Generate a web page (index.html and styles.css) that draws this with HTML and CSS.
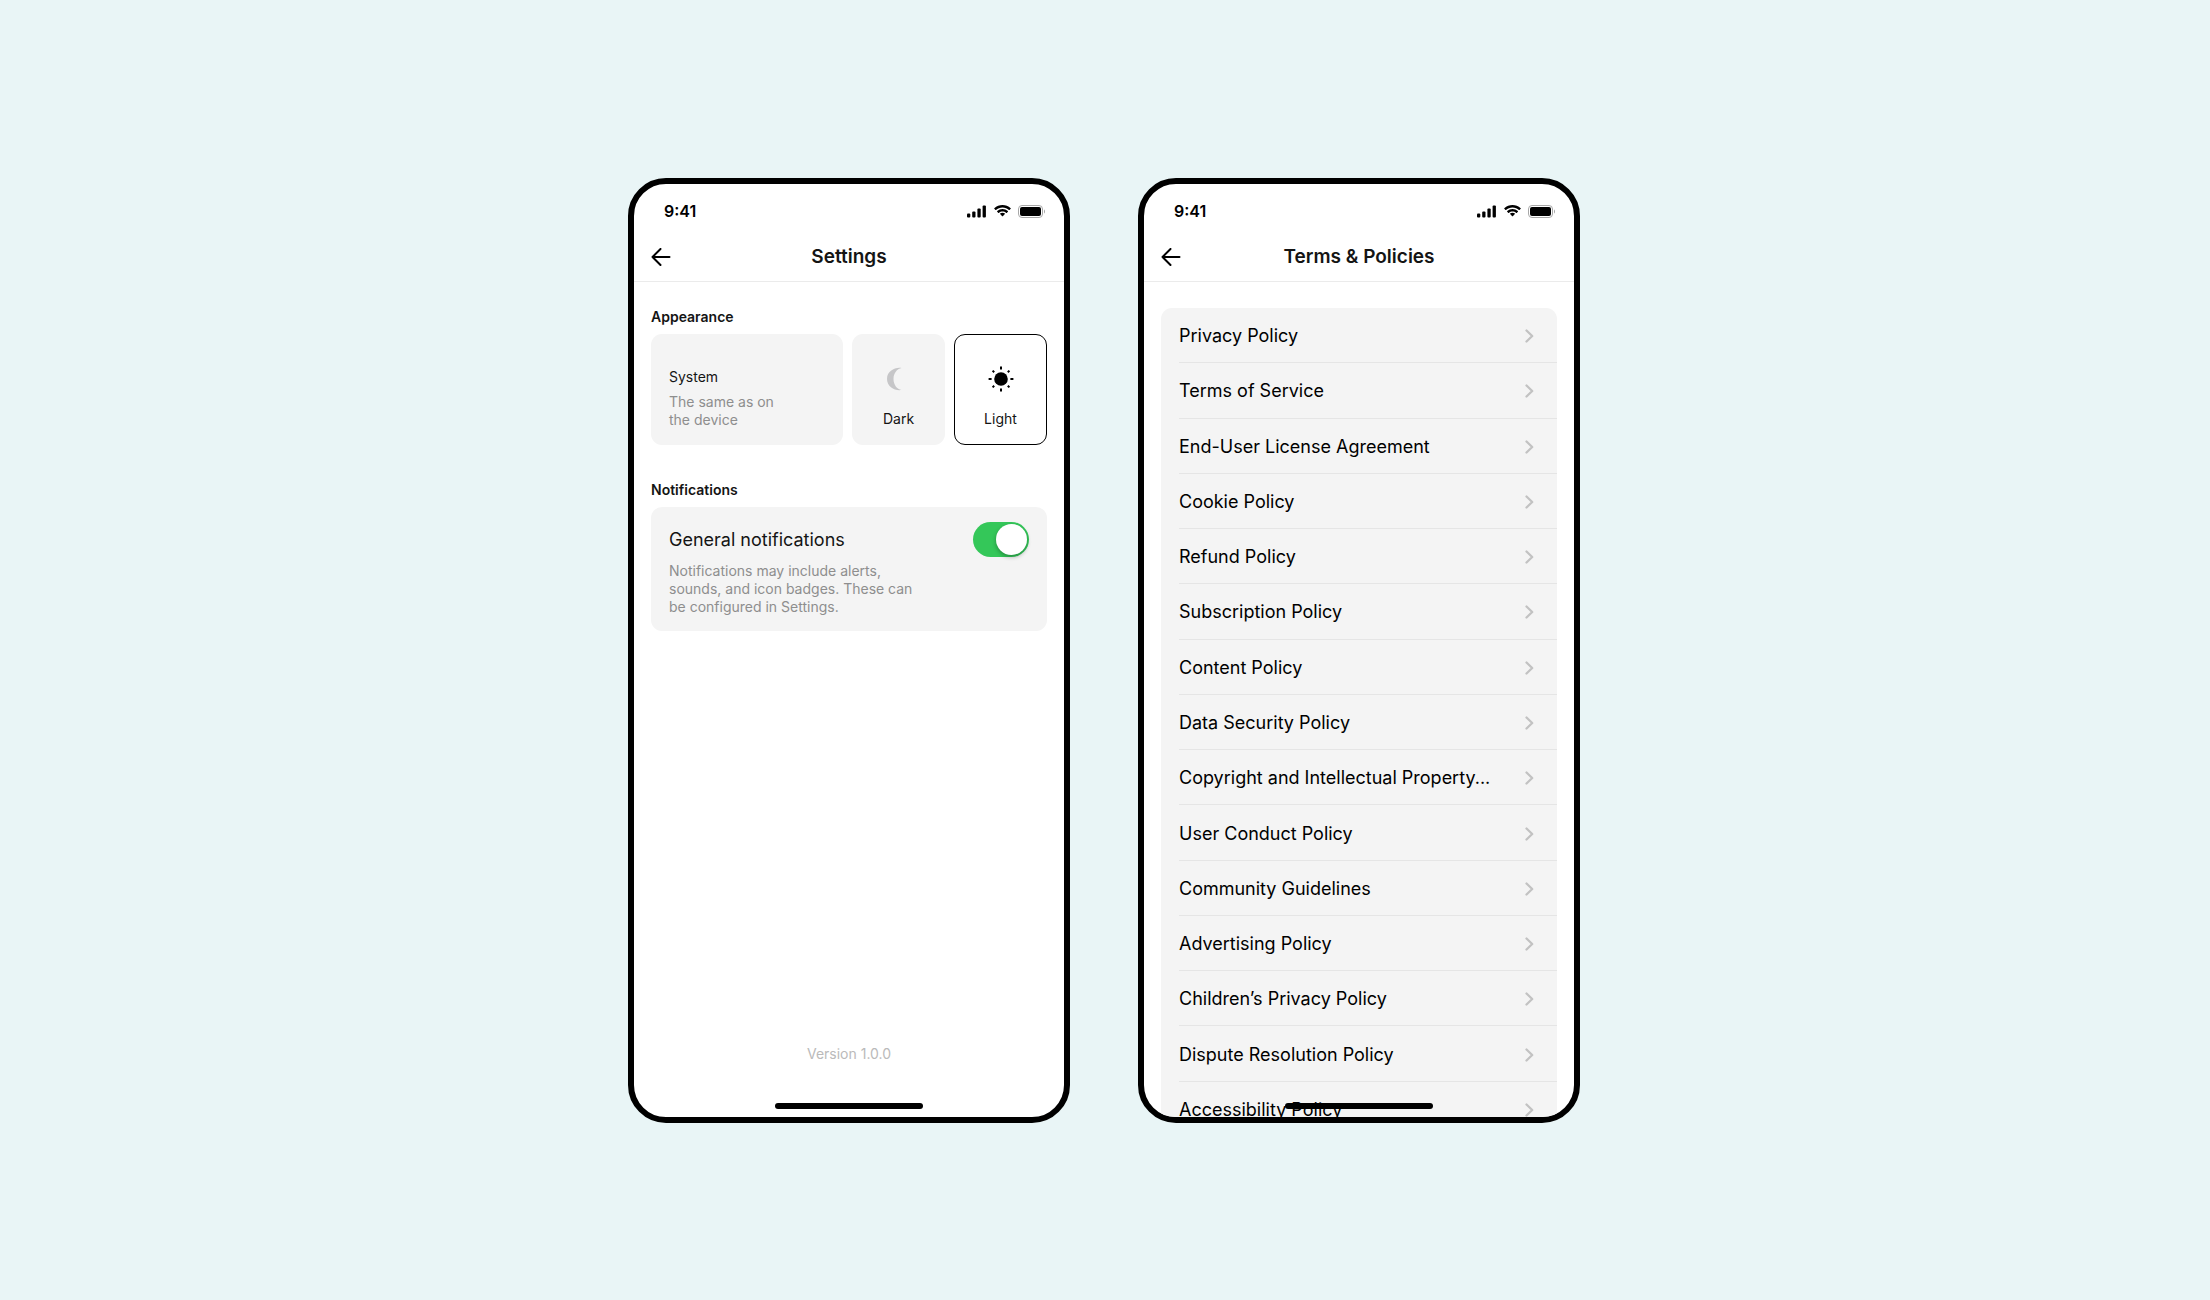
FILE: index.html
```
<!DOCTYPE html>
<html lang="en">
<head>
<meta charset="UTF-8">
<meta name="viewport" content="width=device-width, initial-scale=1.0">
<title>Settings</title>
<link rel="stylesheet" href="styles.css">
</head>
<body>

<!-- shared icons -->
<svg class="sprite" aria-hidden="true">
  <symbol id="signal" viewBox="0 0 20 13">
    <rect x="0" y="8.500" width="3.300" height="4" rx="1"/>
    <rect x="5.200" y="6.500" width="3.300" height="6" rx="1"/>
    <rect x="10.400" y="3.500" width="3.300" height="9" rx="1"/>
    <rect x="15.600" y="0.500" width="3.300" height="12" rx="1"/>
  </symbol>
  <symbol id="wifi" viewBox="0 0 17 12">
    <path d="M8.5 2.5c2.5 0 4.8.9 6.5 2.5.1.1.3.1.5 0l1.2-1.2c.2-.2.2-.4 0-.6C12.1-1 4.9-1 .3 3.2c-.2.2-.2.4 0 .6L1.5 5c.2.1.4.1.5 0C3.7 3.4 6 2.5 8.500 2.500z"/>
    <path d="M8.500 6.500c1.400 0 2.700.5 3.700 1.400.2.1.4.1.5 0l1.200-1.200c.2-.2.2-.4 0-.6-3-2.800-7.700-2.800-10.700 0-.2.2-.2.4 0 .6l1.200 1.200c.1.1.3.1.5 0 1-.9 2.300-1.400 3.600-1.400z"/>
    <path d="M10.900 9.100c.2-.2.2-.4 0-.5-1.400-1.200-3.400-1.200-4.800 0-.2.1-.2.300 0 .5l2.100 2.100c.2.200.4.200.6 0z"/>
  </symbol>
  <symbol id="battery" viewBox="0 0 27 13">
    <rect x="0.500" y="0.500" width="24" height="12" rx="3.500" fill="#fff" stroke="#a8a8a8"/>
    <rect x="2" y="2" width="21" height="9" rx="2"/>
    <path d="M26 4.500v4c.7-.3 1-1.100 1-2s-.3-1.700-1-2z" fill="#aaa"/>
  </symbol>
  <symbol id="back" viewBox="0 0 20 18">
    <path d="M18.500 9H1.500M9.500 1L1.500 9l8 8" fill="none" stroke="#000" stroke-width="2" stroke-linecap="round" stroke-linejoin="round"/>
  </symbol>
  <symbol id="chevron" viewBox="0 0 9 14">
    <path d="M1.500 1.500L7.200 7l-5.700 5.500" fill="none" stroke="#c2c2c2" stroke-width="2.300" stroke-linecap="round" stroke-linejoin="round"/>
  </symbol>
</svg>

<main class="page">

  <section class="phone">
    <div class="status">
      <span class="time">9:41</span>
      <span class="status-icons">
        <svg width="20" height="13"><use href="#signal"/></svg>
        <svg width="17" height="12"><use href="#wifi"/></svg>
        <svg width="27" height="13"><use href="#battery"/></svg>
      </span>
    </div>
    <header class="header">
      <button class="back" type="button" aria-label="Back"><svg width="20" height="18"><use href="#back"/></svg></button>
      <h1>Settings</h1>
    </header>
    <form class="content">
      <h2 id="appearance">Appearance</h2>
      <div class="themes" role="radiogroup" aria-labelledby="appearance">
        <label class="theme theme-system">
          <input type="radio" name="theme" value="system">
          <span>System</span>
          <span class="note">The same as on<br>the device</span>
        </label>
        <label class="theme">
          <input type="radio" name="theme" value="dark">
          <svg width="26" height="26" viewBox="0 0 26 26"><path d="M15.500 2C9 1 1 5 1 13s8 12 14.500 11C11 23 7.500 19 7.500 13S11 3 15.500 2z" fill="#c6c6c8"/></svg>
          <span>Dark</span>
        </label>
        <label class="theme">
          <input type="radio" name="theme" value="light" checked>
          <svg width="26" height="26" viewBox="0 0 26 26">
            <circle cx="13" cy="13" r="6.800"/>
            <path d="M13 .6v3M13 22.400v3M.6 13h3M22.400 13h3M4.600 4.600l1.600 1.600M19.800 19.800l1.600 1.600M4.600 21.400l1.600-1.600M19.800 6.200l1.600-1.600" stroke="#000" stroke-width="2"/>
          </svg>
          <span>Light</span>
        </label>
      </div>

      <h2>Notifications</h2>
      <div class="card">
        <div class="card-row">
          <label for="general">General notifications</label>
          <input class="switch" type="checkbox" role="switch" id="general" checked>
        </div>
        <p class="note">Notifications may include alerts,<br>sounds, and icon badges. These can<br>be configured in Settings.</p>
      </div>

      <p class="version">Version 1.0.0</p>
    </form>
    <div class="home-bar"></div>
  </section>

  <section class="phone">
    <div class="status">
      <span class="time">9:41</span>
      <span class="status-icons">
        <svg width="20" height="13"><use href="#signal"/></svg>
        <svg width="17" height="12"><use href="#wifi"/></svg>
        <svg width="27" height="13"><use href="#battery"/></svg>
      </span>
    </div>
    <header class="header">
      <button class="back" type="button" aria-label="Back"><svg width="20" height="18"><use href="#back"/></svg></button>
      <h1>Terms &amp; Policies</h1>
    </header>
    <nav class="content">
      <ul class="policies">
        <li><a href="#"><span>Privacy Policy</span><svg width="9" height="14"><use href="#chevron"/></svg></a></li>
        <li><a href="#"><span>Terms of Service</span><svg width="9" height="14"><use href="#chevron"/></svg></a></li>
        <li><a href="#"><span>End-User License Agreement</span><svg width="9" height="14"><use href="#chevron"/></svg></a></li>
        <li><a href="#"><span>Cookie Policy</span><svg width="9" height="14"><use href="#chevron"/></svg></a></li>
        <li><a href="#"><span>Refund Policy</span><svg width="9" height="14"><use href="#chevron"/></svg></a></li>
        <li><a href="#"><span>Subscription Policy</span><svg width="9" height="14"><use href="#chevron"/></svg></a></li>
        <li><a href="#"><span>Content Policy</span><svg width="9" height="14"><use href="#chevron"/></svg></a></li>
        <li><a href="#"><span>Data Security Policy</span><svg width="9" height="14"><use href="#chevron"/></svg></a></li>
        <li><a href="#"><span>Copyright and Intellectual Property...</span><svg width="9" height="14"><use href="#chevron"/></svg></a></li>
        <li><a href="#"><span>User Conduct Policy</span><svg width="9" height="14"><use href="#chevron"/></svg></a></li>
        <li><a href="#"><span>Community Guidelines</span><svg width="9" height="14"><use href="#chevron"/></svg></a></li>
        <li><a href="#"><span>Advertising Policy</span><svg width="9" height="14"><use href="#chevron"/></svg></a></li>
        <li><a href="#"><span>Children’s Privacy Policy</span><svg width="9" height="14"><use href="#chevron"/></svg></a></li>
        <li><a href="#"><span>Dispute Resolution Policy</span><svg width="9" height="14"><use href="#chevron"/></svg></a></li>
        <li><a href="#"><span>Accessibility Policy</span><svg width="9" height="14"><use href="#chevron"/></svg></a></li>
      </ul>
    </nav>
    <div class="home-bar"></div>
  </section>

</main>

</body>
</html>
```
FILE: styles.css
```
* {
  box-sizing: border-box;
  margin: 0;
  padding: 0;
}

body {
  background-color: #e9f5f6;
  color: #141414;
  font-family: Inter, "Liberation Sans", sans-serif;
  font-size: 14px;
  line-height: 18px;
}

.sprite {
  display: none;
}

.page {
  display: flex;
  justify-content: center;
  align-items: flex-start;
  gap: 68px;
  min-height: 100vh;
  padding: 178px 26px 178px 24px;
}

.phone {
  position: relative;
  display: flex;
  flex-direction: column;
  flex: 0 1 442px;
  aspect-ratio: 442 / 945;
  min-height: 0;
  overflow: hidden;
  border: 6px solid #000;
  border-radius: 38px;
  background-color: #fff;
}

.status {
  display: flex;
  flex: none;
  justify-content: space-between;
  align-items: center;
  height: 49px;
  padding: 5px 19px 0 30px;
}

.time {
  color: #000;
  font-size: 16px;
  font-weight: 600;
}

.status-icons {
  display: flex;
  align-items: center;
  gap: 7px;
}

.header {
  display: grid;
  flex: none;
  grid-template-columns: 20px 1fr 20px;
  align-items: center;
  height: 49px;
  padding: 0 17px;
  border-bottom: 1px solid #ebebeb;
}

.header h1 {
  font-size: 19px;
  font-weight: 600;
  line-height: 24px;
  text-align: center;
}

.back {
  display: flex;
  border: none;
  background: none;
  cursor: pointer;
}

.content {
  display: flex;
  flex: 1;
  flex-direction: column;
  min-height: 0;
  padding: 26px 17px 0;
}

h2 {
  margin-bottom: 8px;
  font-size: 14px;
  font-weight: 600;
  line-height: 18px;
}

.themes {
  display: grid;
  grid-template-columns: 192px 1fr 1fr;
  gap: 9px;
  margin-bottom: 36px;
}

.theme {
  display: flex;
  flex-direction: column;
  align-items: center;
  justify-content: flex-end;
  gap: 18px;
  height: 111px;
  padding: 0 17px 16px;
  border: 1px solid transparent;
  border-radius: 11px;
  background-color: #f4f4f4;
  cursor: pointer;
}

.theme input {
  position: absolute;
  opacity: 0;
}

.theme:has(input:checked) {
  border-color: #000;
  background-color: #fff;
}

.theme-system {
  align-items: flex-start;
  gap: 7px;
  padding-bottom: 15px;
}

.note {
  color: #8e8e8e;
}

.card {
  padding: 15px 18px;
  border-radius: 11px;
  background-color: #f4f4f4;
}

.card-row {
  display: flex;
  justify-content: space-between;
  align-items: center;
  margin-bottom: 5px;
  font-size: 18px;
}

.switch {
  display: flex;
  width: 56px;
  height: 35px;
  padding: 2px;
  border-radius: 18px;
  background-color: #c6c6c8;
  appearance: none;
  cursor: pointer;
}

.switch::before {
  content: "";
  width: 31px;
  height: 31px;
  border-radius: 50%;
  background-color: #fff;
  box-shadow: 0 2px 4px rgba(0, 0, 0, 0.3);
}

.switch:checked {
  justify-content: flex-end;
  background-color: #34c759;
}

.version {
  margin: auto 0 54px;
  color: #bababa;
  text-align: center;
}

.home-bar {
  position: absolute;
  bottom: 8px;
  left: 50%;
  width: 148px;
  height: 6px;
  border-radius: 3px;
  background-color: #000;
  transform: translateX(-50%);
}

.policies {
  display: grid;
  flex: none;
  grid-auto-rows: 1fr;
  min-height: 829px;
  padding-left: 18px;
  border-radius: 11px;
  background-color: #f4f4f4;
  list-style: none;
}

.policies li {
  border-bottom: 1px solid #e5e5e5;
}

.policies a {
  display: flex;
  justify-content: space-between;
  align-items: center;
  height: 100%;
  padding: 2px 23px 0 0;
  color: #000;
  font-size: 18px;
  text-decoration: none;
}
```
